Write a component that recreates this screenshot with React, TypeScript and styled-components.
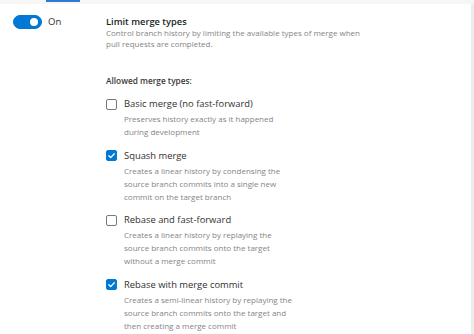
import React from 'react'
import styled, {createGlobalStyle} from 'styled-components'

const GlobalStyle = createGlobalStyle`
  html, body {
    margin: 0;
    padding: 0;
    background: #ffffff;
  }
  body {
    font-family: 'Open Sans', 'Noto Sans', sans-serif;
    color: #323130;
  }
`

type MergeType = {
  label: string
  description: string[]
  checked: boolean
}

const mergeTypes: MergeType[] = [
  {
    label: 'Basic merge (no fast-forward)',
    description: ['Preserves history exactly as it happened', 'during development'],
    checked: false,
  },
  {
    label: 'Squash merge',
    description: [
      'Creates a linear history by condensing the',
      'source branch commits into a single new',
      'commit on the target branch',
    ],
    checked: true,
  },
  {
    label: 'Rebase and fast-forward',
    description: [
      'Creates a linear history by replaying the',
      'source branch commits onto the target',
      'without a merge commit',
    ],
    checked: false,
  },
  {
    label: 'Rebase with merge commit',
    description: [
      'Creates a semi-linear history by replaying the',
      'source branch commits onto the target and',
      'then creating a merge commit',
    ],
    checked: true,
  },
]

const App: React.FC = () => {
  return (
    <>
      <GlobalStyle />
      <Page>
        <TopBar>
          <TabIndicator />
        </TopBar>
        <Body>
          <Panel>
            <ToggleColumn>
              <Toggle $on>
                <Knob $on />
              </Toggle>
              <ToggleLabel>On</ToggleLabel>
            </ToggleColumn>
            <Content>
              <Title>Limit merge types</Title>
              <Subtitle>
                Control branch history by limiting the available types of merge when
                <br />
                pull requests are completed.
              </Subtitle>
              <SectionLabel>Allowed merge types:</SectionLabel>
              <OptionList>
                {mergeTypes.map((item) => (
                  <Option key={item.label}>
                    <OptionRow>
                      <Checkbox $checked={item.checked}>
                        {item.checked && (
                          <svg width='9' height='9' viewBox='0 0 10 10'>
                            <path
                              d='M2 5.3 L4.1 7.3 L8.1 3'
                              fill='none'
                              stroke='#ffffff'
                              strokeWidth='1.4'
                              strokeLinecap='round'
                              strokeLinejoin='round'
                            />
                          </svg>
                        )}
                      </Checkbox>
                      <OptionLabel>{item.label}</OptionLabel>
                    </OptionRow>
                    <OptionDescription>
                      {item.description.map((line) => (
                        <div key={line}>{line}</div>
                      ))}
                    </OptionDescription>
                  </Option>
                ))}
              </OptionList>
            </Content>
          </Panel>
          <ScrollEdge />
        </Body>
      </Page>
    </>
  )
}

export default App

const Page = styled.div`
  width: 474px;
  height: 334px;
  overflow: hidden;
  display: flex;
  flex-direction: column;
`

const TopBar = styled.div`
  height: 4px;
  background: #f6f6f6;
  padding-left: 46px;
  flex-shrink: 0;
`

const TabIndicator = styled.div`
  width: 34px;
  height: 2px;
  background: #2b7cd3;
`

const Body = styled.div`
  flex: 1;
  display: flex;
`

const Panel = styled.div`
  flex: 1;
  display: flex;
  padding-top: 12px;
`

const ScrollEdge = styled.div`
  width: 3px;
  background: #ececec;
`

const ToggleColumn = styled.div`
  width: 106px;
  padding-left: 13px;
  box-sizing: border-box;
  display: flex;
  align-items: flex-start;
  gap: 6px;
`

const Toggle = styled.div<{$on?: boolean}>`
  width: 29px;
  height: 14px;
  margin-top: -1px;
  border-radius: 8px;
  background: ${(p) => (p.$on ? '#0078d4' : '#ffffff')};
  border: 1px solid ${(p) => (p.$on ? '#0078d4' : '#605e5c')};
  box-sizing: border-box;
  position: relative;
`

const Knob = styled.div<{$on?: boolean}>`
  position: absolute;
  top: 2px;
  left: ${(p) => (p.$on ? '16px' : '2px')};
  width: 8px;
  height: 8px;
  border-radius: 50%;
  background: ${(p) => (p.$on ? '#ffffff' : '#605e5c')};
`

const ToggleLabel = styled.span`
  font-size: 9.5px;
  line-height: 12px;
  color: #323130;
`

const Content = styled.div`
  flex: 1;
  display: flex;
  flex-direction: column;
`

const Title = styled.div`
  font-size: 9.3px;
  font-weight: 600;
  line-height: 12px;
  color: #201f1e;
`

const Subtitle = styled.div`
  font-size: 8px;
  line-height: 11px;
  margin-top: -1px;
  color: #858483;
`

const SectionLabel = styled.div`
  font-size: 8.3px;
  font-weight: 600;
  line-height: 14px;
  color: #3b3a39;
  margin-top: 25px;
`

const OptionList = styled.div`
  display: flex;
  flex-direction: column;
  gap: 10.5px;
  margin-top: 9px;
`

const Option = styled.div`
  display: flex;
  flex-direction: column;
`

const OptionRow = styled.div`
  display: flex;
  align-items: center;
  gap: 7px;
`

const Checkbox = styled.div<{$checked?: boolean}>`
  width: 11px;
  height: 11px;
  box-sizing: border-box;
  border-radius: 2px;
  border: 1px solid ${(p) => (p.$checked ? '#0078d4' : '#7a7876')};
  background: ${(p) => (p.$checked ? '#0078d4' : '#ffffff')};
  display: flex;
  align-items: center;
  justify-content: center;
`

const OptionLabel = styled.span`
  font-size: 9.4px;
  line-height: 14px;
  color: #323130;
`

const OptionDescription = styled.div`
  padding-left: 18px;
  margin-top: 1px;
  font-size: 8px;
  line-height: 13px;
  color: #858483;
`
